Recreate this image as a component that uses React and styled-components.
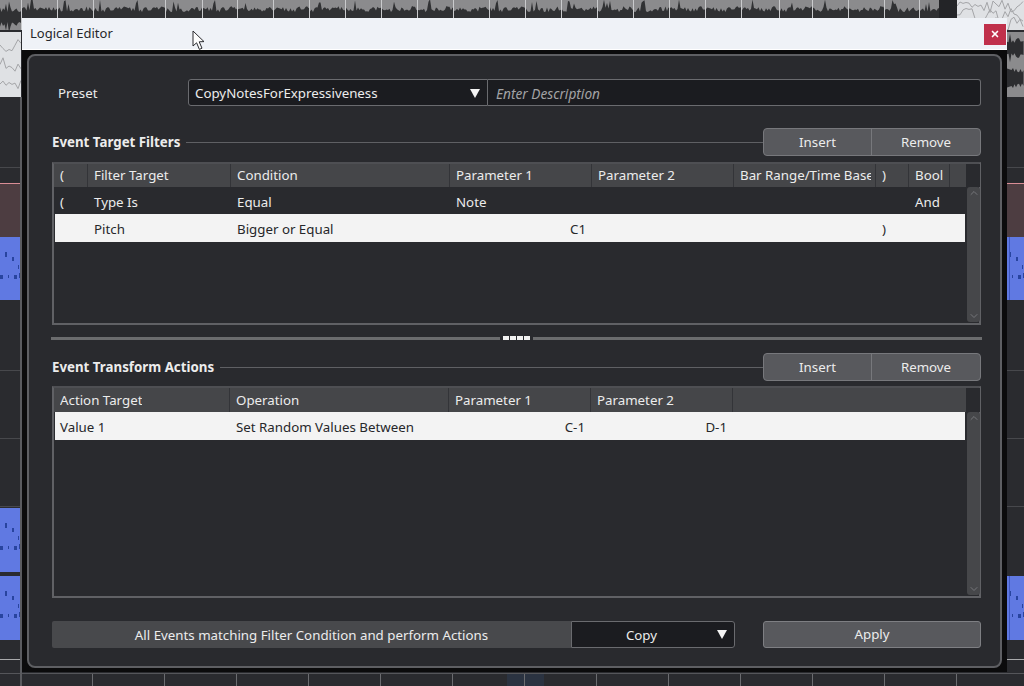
import React from "react";
import styled, { createGlobalStyle } from "styled-components";
import { ChevronUp, ChevronDown, X } from "lucide-react";

const FONT = `"Noto Sans", "Open Sans", sans-serif`;

const FILTER_COLS = "34px 143px 219px 142px 142px 142px 33px 41px 1fr";
const ACTION_COLS = "176px 219px 142px 142px 1fr";

const FILTER_HEAD = ["(", "Filter Target", "Condition", "Parameter 1", "Parameter 2", "Bar Range/Time Base", ")", "Bool", ""];
const ACTION_HEAD = ["Action Target", "Operation", "Parameter 1", "Parameter 2", ""];

const FILTER_ROWS = [
  { cells: ["(", "Type Is", "Equal", "Note", "", "", "", "And", ""] },
  { cells: ["", "Pitch", "Bigger or Equal", "C1", "", "", ")", "", ""], selected: true, right: [3] },
];
const ACTION_ROWS = [
  { cells: ["Value 1", "Set Random Values Between", "C-1", "D-1", ""], selected: true, right: [2, 3] },
];

// widths of the audio events along the top lane
const TOP_CLIPS = [21, 36, 36, 72, 37, 35, 36, 36, 36, 36, 36, 36, 36, 36, 36, 36, 36, 36, 36, 36, 38, 33, 36, 36, 35, 20];

const wavePath = (w, h, seed, mid = h * 0.57) => {
  let up = `M0 ${mid}`;
  let down = "";
  let s = seed * 97 + 13;
  for (let x = 0; x <= w; x += 1.5) {
    s = (s * 31 + 17) % 101;
    const pos = x % 36;
    const body = 5 + (s / 101) * 5;
    const spike = pos > 5 && pos < 13 && s % 3 === 0 ? h * 0.27 : 0;
    const a = body + spike + (pos > 24 ? 1 : 0);
    up += ` L${x} ${(mid - a).toFixed(1)}`;
    down = ` L${x} ${(mid + a).toFixed(1)}` + down;
  }
  return `${up}${down} Z`;
};

const zigzag = (w, h, seed, y) => {
  let s = seed * 53 + 7;
  let d = `M0 ${y}`;
  for (let x = 3; x <= w; x += 3) {
    s = (s * 29 + 11) % 89;
    d += ` L${x} ${(y + (s / 89 - 0.5) * h).toFixed(1)}`;
  }
  return d;
};

const GlobalStyle = createGlobalStyle`
  html, body {
    margin: 0;
    padding: 0;
    background: #2a2b2f;
    font-family: ${FONT};
  }
  * {
    box-sizing: border-box;
  }
`;

const Desktop = styled.div`
  position: relative;
  width: 1024px;
  height: 686px;
  overflow: hidden;
  background: #2a2b2f;
`;

const Arrange = styled.div`
  display: flex;
  flex-direction: column;
  height: 100%;
`;

const Lane = styled.div`
  display: flex;
  justify-content: space-between;
  flex: none;
  height: ${(p) => p.$h}px;
  border-top: ${(p) => (p.$line ? `1px solid ${p.$line}` : "none")};
  background: ${(p) => p.$bg || "transparent"};
`;

const TopClips = styled.div`
  display: flex;
  height: 30px;
`;

const Event = styled.div`
  flex: none;
  width: ${(p) => p.$w}px;
  height: ${(p) => p.$height || 30}px;
  border-left: ${(p) => (p.$edge ? "1px solid #c9cacc" : "none")};
  background: ${(p) => p.$bg};
  overflow: hidden;
  svg {
    display: block;
  }
`;

const EndStop = styled.div`
  flex: none;
  width: 18px;
  height: 30px;
  background: #232427;
`;

const LeftEdge = styled.div`
  position: absolute;
  left: 20px;
  top: 97px;
  bottom: 0;
  width: 2px;
  background: #5a5b5f;
`;

const Ruler = styled.div`
  flex: 1;
  border-top: 1px solid #55565a;
  background:
    repeating-linear-gradient(to right, #6b6c70 0 1px, transparent 1px 72px) 20px 0 no-repeat,
    linear-gradient(#2b3341, #2b3341) 507px 0 / 37px 100% no-repeat,
    #2a2b2f;
`;

const Window = styled.div`
  position: absolute;
  left: 22px;
  top: 18px;
  width: 985px;
  height: 654px;
  display: flex;
  flex-direction: column;
  background: #0b0b0c;
`;

const TitleBar = styled.div`
  flex: none;
  display: flex;
  align-items: center;
  justify-content: space-between;
  height: 32px;
  padding: 0 1px 2px 8px;
  background: #eff2f7;
  border-bottom: 1px solid #ffffff;
`;

const Title = styled.span`
  font-size: 13px;
  color: #26272a;
`;

const CloseButton = styled.div`
  display: flex;
  align-items: center;
  justify-content: center;
  width: 22px;
  height: 21px;
  margin-top: 3px;
  background: #c0304b;
  color: #fff;
`;

const Panel = styled.div`
  flex: 1;
  display: flex;
  flex-direction: column;
  margin: 4px 5px 4px 5px;
  padding: 23px 19px 18px 23px;
  background: #292a2e;
  border: 2px solid #5e5f63;
  border-radius: 8px;
  color: #ececec;
  font-size: 13.3px;
`;

const PresetRow = styled.div`
  display: flex;
  align-items: center;
  height: 27px;
`;

const PresetLabel = styled.span`
  width: 136px;
  padding: 1px 0 0 6px;
`;

const Combo = styled.div`
  display: flex;
  align-items: center;
  justify-content: space-between;
  flex: none;
  width: ${(p) => p.$w}px;
  height: 27px;
  padding: ${(p) => (p.$flat ? "0 6px" : "1px 6px 0")};
  background: #1b1c20;
  border: 1px solid #6a6b6f;
  border-radius: ${(p) => p.$radius || "3px 0 0 3px"};
`;

const DescriptionField = styled.div`
  flex: 1;
  display: flex;
  align-items: center;
  height: 27px;
  padding: 1px 0 0 8px;
  background: #1b1c20;
  border: 1px solid #6a6b6f;
  border-left: none;
  border-radius: 0 3px 3px 0;
  color: #a2a3a5;
  font-size: 13.7px;
  font-style: italic;
`;

const Arrow = styled.svg`
  flex: none;
  width: 10px;
  height: 9px;
  margin-right: 1px;
`;

const SectionHead = styled.div`
  display: flex;
  align-items: center;
  height: 28px;
  margin-top: ${(p) => p.$top}px;
`;

const SectionTitle = styled.span`
  font-weight: 700;
  white-space: nowrap;
`;

const SectionLine = styled.div`
  flex: 1;
  height: 1px;
  margin-left: 6px;
  background: #5f6064;
`;

const ButtonPair = styled.div`
  flex: none;
  display: flex;
  width: 218px;
  height: 28px;
  background: #58595d;
  border: 1px solid #77787c;
  border-radius: 4px;
`;

const PairButton = styled.div`
  flex: ${(p) => (p.$first ? "0 0 108px" : 1)};
  display: flex;
  align-items: center;
  justify-content: center;
  border-right: ${(p) => (p.$first ? "1px solid #77787c" : "none")};
`;

const TableFrame = styled.div`
  display: grid;
  grid-template-columns: 912px 1fr;
  grid-template-rows: ${(p) => p.$headH}px 1fr;
  height: ${(p) => p.$h}px;
  margin-top: ${(p) => p.$top}px;
  border: 2px solid #606165;
  border-top-color: #4e4f53;
`;

const HeaderRow = styled.div`
  display: grid;
  grid-template-columns: ${(p) => p.$cols};
  background: #454649;
`;

const HeaderCell = styled.div`
  display: flex;
  align-items: center;
  min-width: 0;
  padding: 0 4px 1px 6px;
  border-right: ${(p) => (p.$last ? "none" : "1px solid #333438")};
`;

const HeaderText = styled.span`
  min-width: 0;
  overflow: hidden;
  white-space: nowrap;
`;

const Corner = styled.div`
  background: #292a2e;
`;

const Rows = styled.div`
  min-width: 0;
`;

const Row = styled.div`
  display: grid;
  grid-template-columns: ${(p) => p.$cols};
  height: ${(p) => (p.$selected ? 28 : 27)}px;
  margin: 0 1px;
  background: ${(p) => (p.$selected ? "#f3f3f3" : "transparent")};
  color: ${(p) => (p.$selected ? "#26272a" : "#ececec")};
`;

const Cell = styled.div`
  display: flex;
  align-items: center;
  justify-content: ${(p) => (p.$right ? "flex-end" : "flex-start")};
  padding: 2px 7px 0 5px;
  white-space: nowrap;
`;

const ScrollTrack = styled.div`
  display: flex;
  flex-direction: column;
  justify-content: space-between;
  align-items: center;
  width: 13px;
  margin: 0 0 1px 1px;
  background: #46474a;
  border-radius: 3px;
  color: #75767a;
`;

const Splitter = styled.div`
  display: flex;
  align-items: center;
  gap: 3px;
  height: 4px;
  margin: 11px -1px 0 -1px;
`;

const SplitBar = styled.div`
  flex: 1;
  height: 3px;
  background: #6b6c6e;
`;

const Grip = styled.div`
  display: flex;
  gap: 1px;
`;

const GripDot = styled.div`
  width: 6px;
  height: 4px;
  background: #f2f2f2;
`;

const Footer = styled.div`
  display: flex;
  height: 27px;
  margin-top: 23px;
`;

const Status = styled.div`
  flex: none;
  display: flex;
  align-items: center;
  justify-content: center;
  width: 519px;
  background: #48494c;
  border-radius: 2px 0 0 2px;
`;

const ComboText = styled.span`
  flex: 1;
  padding-right: 12px;
  text-align: center;
`;

const ApplyButton = styled.div`
  display: flex;
  align-items: center;
  justify-content: center;
  width: 218px;
  margin-left: 28px;
  padding-bottom: 1px;
  background: #58595d;
  border: 1px solid #7e7f83;
  border-radius: 3px;
`;

const Cursor = styled.svg`
  position: absolute;
  left: 192px;
  top: 30px;
  width: 14px;
  height: 21px;
`;

const Wave = ({ w, seed }) => (
  <svg width={w} height="30" viewBox={`0 0 ${w} 30`}>
    <path d={wavePath(w, 30, seed)} fill="#303133" />
  </svg>
);

const LightWave = ({ w, h, seed }) => (
  <svg width={w} height={h} viewBox={`0 0 ${w} ${h}`}>
    {[0.2, 0.5, 0.8].map((f, i) => (
      <path key={f} d={zigzag(w, 14, seed + i, h * f)} fill="none" stroke="#a4a5a8" strokeWidth="1" />
    ))}
  </svg>
);

const GreyWave = ({ w, h }) => (
  <svg width={w} height={h} viewBox={`0 0 ${w} ${h}`}>
    <path d={wavePath(w, 20, 4, 10)} transform="translate(0 6)" fill="#2c2d30" />
    <path d={wavePath(w, 20, 8, 10)} transform="translate(0 36)" fill="#2c2d30" />
  </svg>
);

const NOTES = [
  [5, 15, 2, 5], [12, 20, 2, 4], [18, 28, 1, 4], [20, 33, 2, 3], [0, 38, 3, 4],
  [8, 38, 1, 3], [14, 38, 3, 4], [19, 36, 2, 5],
];

const Notes = ({ w, h, flip }) => (
  <svg width={w} height={h} viewBox={`0 0 ${w} ${h}`}>
    {NOTES.map(([x, y, nw, nh]) => (
      <rect key={`${x}-${y}`} x={flip ? x % w : x} y={y} width={nw} height={nh} fill="#28449f" />
    ))}
    {flip && <rect x="5" y="0" width="1" height={h} fill="#3f58c4" />}
  </svg>
);

const DownArrow = () => (
  <Arrow viewBox="0 0 10 9">
    <polygon points="0,0 10,0 5,9" fill="#f4f4f4" />
  </Arrow>
);

const DataTable = ({ cols, head, rows, height, top, headH }) => (
  <TableFrame $h={height} $top={top} $headH={headH}>
    <HeaderRow $cols={cols}>
      {head.map((h, i) => (
        <HeaderCell key={i} $last={i === head.length - 1}>
          <HeaderText>{h}</HeaderText>
        </HeaderCell>
      ))}
    </HeaderRow>
    <Corner />
    <Rows>
      {rows.map((row, i) => (
        <Row key={i} $cols={cols} $selected={row.selected}>
          {row.cells.map((c, j) => (
            <Cell key={j} $right={row.right && row.right.includes(j)}>
              {c}
            </Cell>
          ))}
        </Row>
      ))}
    </Rows>
    <ScrollTrack>
      <ChevronUp size={12} strokeWidth={2} />
      <ChevronDown size={12} strokeWidth={2} />
    </ScrollTrack>
  </TableFrame>
);

const SectionHeader = ({ title, top }) => (
  <SectionHead $top={top}>
    <SectionTitle>{title}</SectionTitle>
    <SectionLine />
    <ButtonPair>
      <PairButton $first>Insert</PairButton>
      <PairButton>Remove</PairButton>
    </ButtonPair>
  </SectionHead>
);

const App = () => {
  return (
    <Desktop>
      <GlobalStyle />
      <Arrange>
        <Lane $h={32}>
          <TopClips>
            {TOP_CLIPS.map((w, i) => (
              <Event key={i} $w={w} $bg="#8b8b8d" $edge={i > 0}>
                <Wave w={w} seed={i + 1} />
              </Event>
            ))}
            <EndStop />
          </TopClips>
          <Event $w={67} $bg="#dfe1e4">
            <LightWave w={67} h={30} seed={3} />
          </Event>
        </Lane>
        <Lane $h={65}>
          <Event $w={21} $bg="#dfe1e4" $height={65}>
            <LightWave w={21} h={65} seed={5} />
          </Event>
          <Event $w={20} $bg="#8b8b8d" $height={65}>
            <GreyWave w={20} h={65} />
          </Event>
        </Lane>
        <Lane $h={70} />
        <Lane $h={16} $line="#47484c" />
        <Lane $h={54} $line="#d98d95" $bg="#4d3d41" />
        <Lane $h={63}>
          <Event $w={21} $bg="#6079e2" $height={63}>
            <Notes w={21} h={63} />
          </Event>
          <Event $w={20} $bg="#6079e2" $height={63}>
            <Notes w={20} h={63} flip />
          </Event>
        </Lane>
        <Lane $h={70} />
        <Lane $h={68} $line="#47484c" />
        <Lane $h={68} $line="#47484c" />
        <Lane $h={2} $line="#47484c" />
        <Lane $h={64}>
          <Event $w={21} $bg="#6079e2" $height={64}>
            <Notes w={21} h={64} />
          </Event>
        </Lane>
        <Lane $h={4} />
        <Lane $h={64}>
          <Event $w={21} $bg="#6079e2" $height={64}>
            <Notes w={21} h={64} />
          </Event>
          <Event $w={20} $bg="#6079e2" $height={64}>
            <Notes w={20} h={64} flip />
          </Event>
        </Lane>
        <Lane $h={19} />
        <Lane $h={14} $line="#a9aaac" />
        <Ruler />
      </Arrange>
      <LeftEdge />

      <Window>
        <TitleBar>
          <Title>Logical Editor</Title>
          <CloseButton>
            <X size={10} strokeWidth={4} />
          </CloseButton>
        </TitleBar>
        <Panel>
          <PresetRow>
            <PresetLabel>Preset</PresetLabel>
            <Combo $w={300}>
              CopyNotesForExpressiveness
              <DownArrow />
            </Combo>
            <DescriptionField>Enter Description</DescriptionField>
          </PresetRow>

          <SectionHeader title="Event Target Filters" top={22} />
          <DataTable cols={FILTER_COLS} head={FILTER_HEAD} rows={FILTER_ROWS} height={163} top={6} headH={23} />

          <Splitter>
            <SplitBar />
            <Grip>
              {[0, 1, 2, 3].map((d) => (
                <GripDot key={d} />
              ))}
            </Grip>
            <SplitBar />
          </Splitter>

          <SectionHeader title="Event Transform Actions" top={13} />
          <DataTable cols={ACTION_COLS} head={ACTION_HEAD} rows={ACTION_ROWS} height={212} top={5} headH={24} />

          <Footer>
            <Status>All Events matching Filter Condition and perform Actions</Status>
            <Combo $w={164} $radius="0 3px 3px 0" $flat>
              <ComboText>Copy</ComboText>
              <DownArrow />
            </Combo>
            <ApplyButton>Apply</ApplyButton>
          </Footer>
        </Panel>
      </Window>

      <Cursor viewBox="0 0 14 21">
        <path d="M1 1 L1 16 L4.6 12.8 L7.4 19.4 L10 18.2 L7.2 11.8 L12 11.6 Z" fill="#fdfdfd" stroke="#2a2b2f" strokeWidth="1" />
      </Cursor>
    </Desktop>
  );
};

export default App;
